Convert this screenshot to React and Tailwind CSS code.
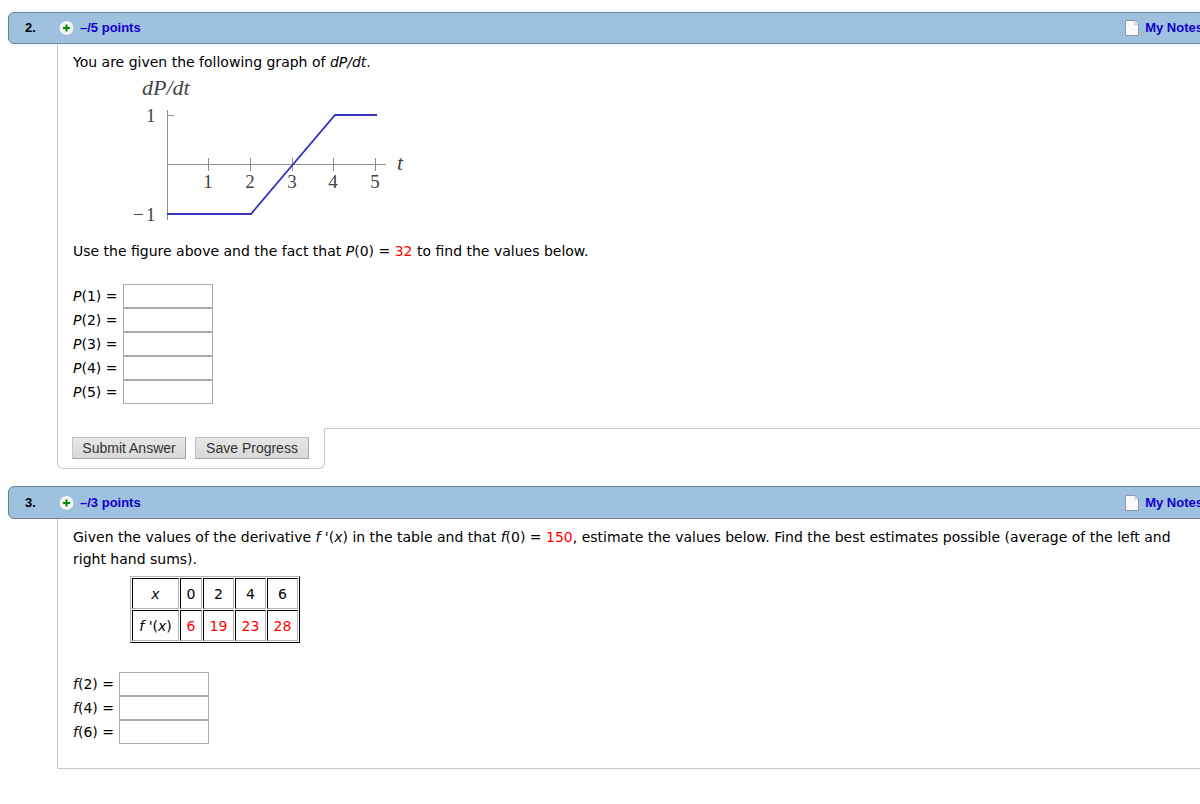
import React from "react";

const PlusIcon = () => (
  <svg width="16" height="16" viewBox="0 0 16 16" className="shrink-0" aria-hidden="true">
    <circle cx="7.500" cy="8.600" r="7" fill="#8f9ba5" opacity="0.6" />
    <circle cx="7.500" cy="8" r="7" fill="#f4f4f2" />
    <path d="M6.500 4.500h2v2.500h2.500v2h-2.500v2.500h-2v-2.500h-2.500v-2h2.500z" fill="#008a00" />
  </svg>
);

const NoteIcon = () => (
  <svg width="16" height="18" viewBox="0 0 16 18" className="shrink-0" aria-hidden="true">
    <path
      d="M1.500 1.500h9.500l3.500 3.500v11.500h-13z"
      fill="#fafafa"
      stroke="#8d9aa5"
      strokeLinejoin="round"
    />
    <path d="M10.500 2v3.500h3.500" fill="#e6e6e6" stroke="#d5d8da" />
  </svg>
);

// Header bar runs a little past the window edge
const QuestionHeader = ({ number, points, height }) => (
  <header
    className={`-mr-4 ml-2 flex items-center rounded-md border border-[#6b8494] bg-[#9dc1df] pr-3 font-['Liberation_Sans',sans-serif] text-[13px] font-bold whitespace-nowrap ${height}`}
  >
    <h2 className="w-[50px] pl-4">{number}.</h2>
    <a href="#points" className="flex items-center gap-[5px] text-[#1100cc]">
      <PlusIcon />
      –/{points} points
    </a>
    <a href="#notes" className="ml-auto flex items-center gap-[5px] text-[#1100cc]">
      <NoteIcon />
      My Notes
    </a>
  </header>
);

const AnswerRow = ({ fn, arg }) => (
  <label className="flex items-center gap-[5px]">
    <span>
      <i>{fn}</i>({arg}) =
    </span>
    <input type="text" className="h-6 w-[90px] border border-[#abaab1] bg-white px-1" />
  </label>
);

const ActionButton = ({ children }) => (
  <button
    type="button"
    className="h-[22px] w-[114px] border border-[#c4c4c4] border-r-[#a5a5a5] border-b-[#a5a5a5] bg-linear-to-b from-[#e6e6e6] to-[#d9d9d9] font-['Liberation_Sans',sans-serif] text-[14px] leading-5 whitespace-nowrap text-[#333]"
  >
    {children}
  </button>
);

const ticks = [1, 2, 3, 4, 5];

const DerivativeGraph = () => (
  <svg
    width="290"
    height="150"
    viewBox="0 0 290 150"
    className="mt-[3px] ml-[57px] font-['Liberation_Serif',serif]"
    role="img"
    aria-label="Graph of dP/dt against t"
  >
    <g stroke="#8b9095" strokeWidth="1">
      <path d="M37.500 34v110M37 88.500h219M37 39.500h7" />
      {ticks.map((t) => (
        <path key={t} d={`M${Math.floor(37 + t * 41.7) + 0.5} 82v13`} />
      ))}
    </g>
    <path d="M37 138h84L205 39h42" fill="none" stroke="#3434c0" strokeWidth="1.8" />
    <g fill="#444">
      <text x="12" y="19" fontSize="22" fontStyle="italic">dP/dt</text>
      <text x="16" y="46" fontSize="19">1</text>
      <text x="3" y="145" fontSize="19">−</text>
      <text x="16" y="145" fontSize="19">1</text>
      <text x="267" y="94" fontSize="22" fontStyle="italic">t</text>
      {ticks.map((t) => (
        <text key={t} x={Math.floor(37 + t * 41.7)} y="112" fontSize="19" textAnchor="middle">
          {t}
        </text>
      ))}
    </g>
  </svg>
);

const columns = [
  { x: 0, slope: 6, width: "w-[22px]" },
  { x: 2, slope: 19, width: "w-[31px]" },
  { x: 4, slope: 23, width: "w-[31px]" },
  { x: 6, slope: 28, width: "w-[31px]" },
];

const cell =
  "h-[31px] border border-t-black border-l-black border-r-[#b2b2b2] border-b-[#b2b2b2] px-1 text-center font-normal";

const ValuesTable = () => (
  <table className="ml-[57px] border-separate border-spacing-px border border-t-[#b2b2b2] border-r-black border-b-black border-l-[#b2b2b2]">
    <tbody>
      <tr>
        <th scope="row" className={`${cell} w-[47px]`}>
          <i>x</i>
        </th>
        {columns.map((c) => (
          <td key={c.x} className={`${cell} ${c.width}`}>{c.x}</td>
        ))}
      </tr>
      <tr>
        <th scope="row" className={cell}>
          <i>f</i> '(<i>x</i>)
        </th>
        {columns.map((c) => (
          <td key={c.x} className={`${cell} text-[#f00]`}>{c.slope}</td>
        ))}
      </tr>
    </tbody>
  </table>
);

export default function App() {
  return (
    <main className="overflow-hidden bg-white pt-3 pb-9 font-['DejaVu_Sans',sans-serif] text-[14px] leading-[22px] text-black">
      <section>
        <QuestionHeader number={2} points={5} height="h-8" />
        <div className="ml-[57px] border-l border-[#c8c8c8] pt-[7px] pl-[15px]">
          <p>
            You are given the following graph of <i>dP/dt</i>.
          </p>
          <DerivativeGraph />
          <p className="mt-3.5">
            Use the figure above and the fact that <i>P</i>(0) = <span className="text-[#f00]">32</span> to find the
            values below.
          </p>
          <div className="flex flex-col pt-[22px] pb-6">
            {[1, 2, 3, 4, 5].map((n) => (
              <AnswerRow key={n} fn="P" arg={n} />
            ))}
          </div>
        </div>
        <div className="ml-[57px] flex">
          <div className="flex h-[41px] w-[268px] gap-[9px] rounded-b-md border border-t-0 border-[#c8c8c8] pt-[9px] pl-3.5">
            <ActionButton>Submit Answer</ActionButton>
            <ActionButton>Save Progress</ActionButton>
          </div>
          <div className="flex-1 border-t border-[#c8c8c8]" />
        </div>
      </section>

      <section className="mt-[17px]">
        <QuestionHeader number={3} points={3} height="h-[33px]" />
        <div className="ml-[57px] border-b border-l border-[#c8c8c8] pt-[7px] pb-6 pl-[15px]">
          <p className="mb-1.5 pr-4">
            Given the values of the derivative <i>f</i> '(<i>x</i>) in the table and that <i>f</i>(0) ={" "}
            <span className="text-[#f00]">150</span>, estimate the values below. Find the best estimates possible
            (average of the left and right hand sums).
          </p>
          <ValuesTable />
          <div className="flex flex-col pt-[29px]">
            {[2, 4, 6].map((n) => (
              <AnswerRow key={n} fn="f" arg={n} />
            ))}
          </div>
        </div>
      </section>
    </main>
  );
}
